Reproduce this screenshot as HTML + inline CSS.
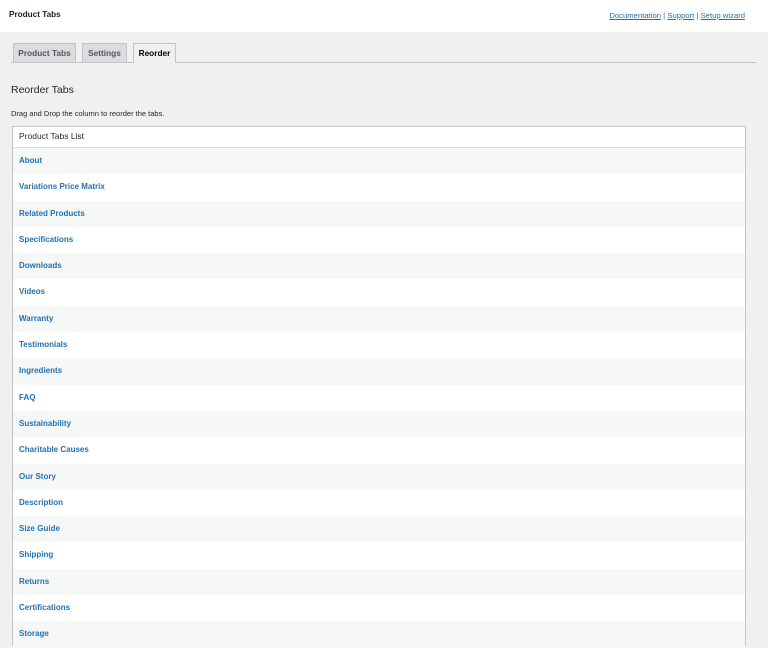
<!DOCTYPE html>
<html><head><style>
*{margin:0;padding:0;box-sizing:border-box}
body{width:768px;height:637px;overflow:hidden;background:#f0f0f1;font-family:"Liberation Sans",sans-serif;color:#1d2327;position:relative}
.hdr{position:absolute;left:0;top:0;width:768px;height:32px;background:#fff}
.hdr .t{position:absolute;left:9px;top:10px;font-size:8.2px;font-weight:bold}
.hdr .l{position:absolute;right:23px;top:11px;font-size:7.7px;color:#2271b1}
.hdr .l a{color:#2271b1;text-decoration:underline}
.tab{position:absolute;top:43px;height:20px;border:1px solid #c3c4c7;border-bottom:none;background:#dcdcde;font-size:8.3px;font-weight:bold;color:#50575e;text-align:center;line-height:18px}
.tab.a{background:#f0f0f1;color:#000;height:20px}
.line{position:absolute;left:11px;top:62px;width:745px;height:1px;background:#c3c4c7}
h2{position:absolute;left:11px;top:84px;font-size:10.5px;font-weight:normal}
.d{position:absolute;left:11px;top:109px;font-size:7.5px}
.tbl{position:absolute;left:12px;top:126px;width:734px;height:520px;border:1px solid #c3c4c7;background:#fff}
.th{height:21px;border-bottom:1px solid #dcdcde;font-size:8.5px;line-height:19px;padding-left:6px}
.r{height:26.3px;line-height:25px;padding-left:6px;font-size:8px;font-weight:bold;color:#2271b1}
.r:nth-child(even){background:#f6f7f7}
</style></head><body>
<div class="hdr"><div class="t">Product Tabs</div><div class="l"><a>Documentation</a> | <a>Support</a> | <a>Setup wizard</a></div></div>
<div class="tab" style="left:13px;width:63px">Product Tabs</div>
<div class="tab" style="left:82px;width:45px">Settings</div>
<div class="line"></div>
<div class="tab a" style="left:133px;width:43px">Reorder</div>
<h2>Reorder Tabs</h2>
<div class="d">Drag and Drop the column to reorder the tabs.</div>
<div class="tbl">
<div class="th">Product Tabs List</div>
<div class="r">About</div><div class="r">Variations Price Matrix</div><div class="r">Related Products</div><div class="r">Specifications</div><div class="r">Downloads</div><div class="r">Videos</div><div class="r">Warranty</div><div class="r">Testimonials</div><div class="r">Ingredients</div><div class="r">FAQ</div><div class="r">Sustainability</div><div class="r">Charitable Causes</div><div class="r">Our Story</div><div class="r">Description</div><div class="r">Size Guide</div><div class="r">Shipping</div><div class="r">Returns</div><div class="r">Certifications</div><div class="r">Storage</div>
</div>
</body></html>
